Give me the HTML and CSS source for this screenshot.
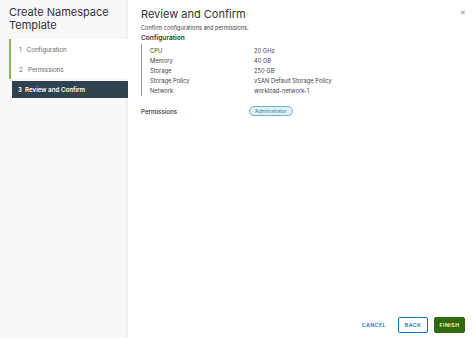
FILE: index.html
```html
<!DOCTYPE html>
<html>
<head>
<meta charset="utf-8">
<link rel="stylesheet" href="styles.css">
</head>
<body>
<div class="modal">
  <aside class="side">
    <h1 class="side-title">Create Namespace Template</h1>
    <div class="steps">
      <div class="done-group">
        <div class="step">1&nbsp;&nbsp;&nbsp;Configuration</div>
        <div class="step">2&nbsp;&nbsp;&nbsp;Permissions</div>
      </div>
      <div class="step active">3&nbsp;&nbsp;Review and Confirm</div>
    </div>
  </aside>
  <main class="content">
    <span class="close">✕</span>
    <h2 class="title">Review and Confirm</h2>
    <p class="desc">Confirm configurations and permissions.</p>
    <h3 class="section">Configuration</h3>
    <div class="props">
      <div class="row"><span class="key">CPU</span><span class="val">20 GHz</span></div>
      <div class="row"><span class="key">Memory</span><span class="val">40 GB</span></div>
      <div class="row"><span class="key">Storage</span><span class="val">250 GB</span></div>
      <div class="row"><span class="key">Storage Policy</span><span class="val">vSAN Default Storage Policy</span></div>
      <div class="row"><span class="key">Network</span><span class="val">workload-network-1</span></div>
    </div>
    <div class="perm">
      <span class="perm-label">Permissions</span>
      <span class="badge">Administrator</span>
    </div>
    <div class="spacer"></div>
    <div class="footer">
      <button class="btn link">CANCEL</button>
      <button class="btn outline">BACK</button>
      <button class="btn primary">FINISH</button>
    </div>
  </main>
</div>
</body>
</html>
```
FILE: styles.css
```css
* { box-sizing: border-box; }
html, body { margin: 0; padding: 0; background: #fff; }
body {
  font-family: "Inter", "Noto Sans", sans-serif;
  color: #333;
  width: 474px;
  height: 341px;
  overflow: hidden;
}
.modal {
  display: flex;
  height: 341px;
}
.side {
  width: 128px;
  height: 338px;
  background: #f8f8f8;
  box-shadow: inset -3px 0 3px -2px #e6e6e6;
  padding: 6px 0 0 9px;
  flex-shrink: 0;
}
.side-title {
  margin: 0;
  font-size: 11px;
  font-weight: 400;
  line-height: 13px;
  color: #333;
}
.steps {
  margin-top: 7px;
  display: flex;
  flex-direction: column;
}
.done-group {
  border-left: 2px solid #88b94a;
  background: #fff;
  display: flex;
  flex-direction: column;
}
.step {
  height: 20px;
  display: flex;
  align-items: center;
  padding-left: 9px;
  font-size: 6.2px;
  color: #666;
  background: #fff;
}
.done-group .step { padding-left: 8px; }
.step.active {
  margin-top: 2px;
  margin-left: 3px;
  height: 17px;
  padding-left: 6px;
  background: #2f4250;
  color: #fff;
  font-weight: 600;
}
.content {
  flex: 1;
  position: relative;
  padding: 7px 9px 8px 13px;
  display: flex;
  flex-direction: column;
}
.close {
  position: absolute;
  top: 8px;
  right: 8px;
  font-size: 7px;
  color: #888;
}
.title {
  margin: 0;
  font-size: 11px;
  font-weight: 400;
  line-height: 14px;
  color: #333;
}
.desc {
  margin: 4px 0 0;
  font-size: 5.6px;
  color: #444;
  line-height: 7px;
}
.section {
  margin: 2px 0 0;
  font-size: 6.6px;
  font-weight: 600;
  color: #333;
  line-height: 8px;
}
.props {
  margin-top: 2px;
  border-left: 1px solid #999;
  padding: 1px 0 1px 8px;
  display: flex;
  flex-direction: column;
}
.row {
  display: flex;
  height: 10px;
  align-items: center;
  font-size: 5.8px;
  color: #444;
}
.key { width: 104px; }
.perm {
  margin-top: 10px;
  display: flex;
  align-items: center;
  font-size: 6.2px;
}
.perm-label { width: 108px; color: #333; font-weight: 500; }
.badge {
  font-size: 5px;
  color: #3e7ca3;
  background: #e1f1f6;
  border: 1px solid #6db2cc;
  border-radius: 6px;
  padding: 1px 5px;
  line-height: 6px;
}
.spacer { flex: 1; }
.footer {
  display: flex;
  justify-content: flex-end;
  align-items: center;
  gap: 6px;
}
.btn {
  font-family: inherit;
  font-size: 5.2px;
  font-weight: 600;
  letter-spacing: 0.5px;
  height: 16px;
  border-radius: 2px;
  padding: 0 8px;
  cursor: pointer;
}
.btn.link {
  background: none;
  border: none;
  color: #0079b8;
  padding: 0 6px 0 0;
}
.btn.outline {
  background: #fff;
  border: 1px solid #0079b8;
  color: #0079b8;
  width: 30px;
  padding: 0;
}
.btn.primary {
  background: #2e6b0c;
  border: 1px solid #2e6b0c;
  color: #fff;
  width: 31px;
  padding: 0;
}
```
